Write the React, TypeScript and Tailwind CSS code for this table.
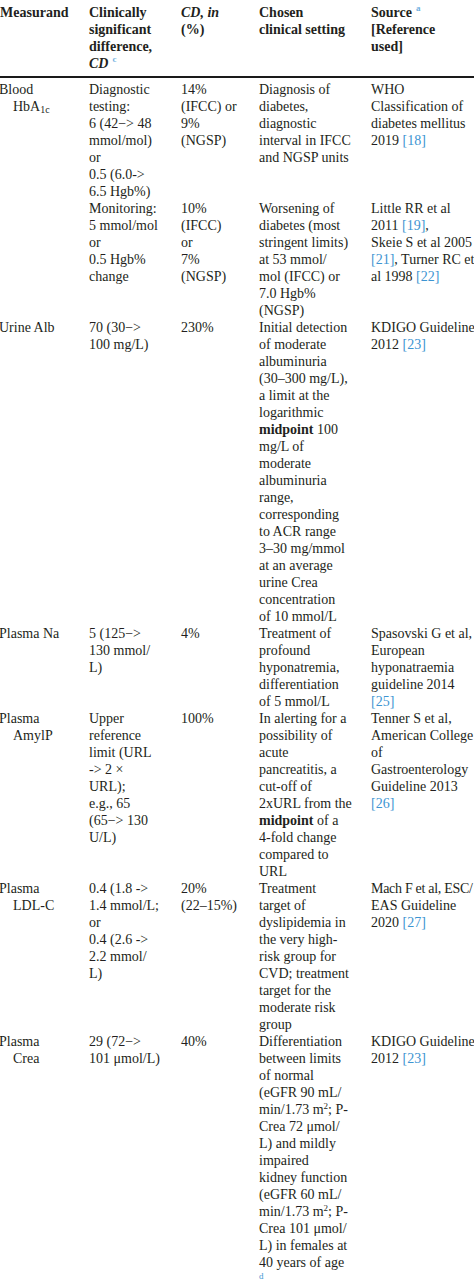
import type { ReactNode } from 'react';

type Lines = ReactNode[];

const Ref = ({ n }: { n: string }) => <span className="text-[#3d95d2]">[{n}]</span>;

const Sup = ({ children }: { children: ReactNode }) => (
  <span className="relative -top-[6px] ml-[4px] text-[9px] leading-none text-[#6fb0e0]">{children}</span>
);

function Line({ children }: { children: ReactNode }) {
  return <div className="h-[17px] leading-[17px] whitespace-nowrap">{children}</div>;
}

function Cell({ lines, first = false }: { lines: Lines; first?: boolean }) {
  return (
    <div className={first ? 'pt-[3px]' : ''}>
      {lines.map((l, i) => (
        <Line key={i}>{l}</Line>
      ))}
    </div>
  );
}

// first column: hanging indent, first line slightly off the left edge
function Measurand({ lines, first = false }: { lines: Lines; first?: boolean }) {
  return (
    <div className={first ? 'pt-[3px]' : ''}>
      {lines.map((l, i) => (
        <div key={i} className={`h-[17px] leading-[17px] whitespace-nowrap ${i === 0 ? '-ml-px' : 'pl-[13px]'}`}>
          {l}
        </div>
      ))}
    </div>
  );
}

type Row = {
  measurand: Lines;
  parts: { cd: Lines; pct: Lines; setting: Lines; source: Lines }[];
};

const rows: Row[] = [
  {
    measurand: ['Blood', <>HbA<sub className="text-[10px]">1c</sub></>],
    parts: [
      {
        cd: ['Diagnostic', 'testing:', '6 (42−> 48', 'mmol/mol)', 'or', '0.5 (6.0->', '6.5 Hgb%)'],
        pct: ['14%', '(IFCC) or', '9%', '(NGSP)'],
        setting: ['Diagnosis of', 'diabetes,', 'diagnostic', 'interval in IFCC', 'and NGSP units'],
        source: ['WHO', 'Classification of', 'diabetes mellitus', <>2019 <Ref n="18" /></>],
      },
      {
        cd: ['Monitoring:', '5 mmol/mol', 'or', '0.5 Hgb%', 'change'],
        pct: ['10%', '(IFCC)', 'or', '7%', '(NGSP)'],
        setting: ['Worsening of', 'diabetes (most', 'stringent limits)', 'at 53 mmol/', 'mol (IFCC) or', '7.0 Hgb%', '(NGSP)'],
        source: [
          'Little RR et al',
          <>2011 <Ref n="19" />,</>,
          'Skeie S et al 2005',
          <><Ref n="21" />, Turner RC et</>,
          <>al 1998 <Ref n="22" /></>,
        ],
      },
    ],
  },
  {
    measurand: ['Urine Alb'],
    parts: [
      {
        cd: ['70 (30−>', '100 mg/L)'],
        pct: ['230%'],
        setting: [
          'Initial detection',
          'of moderate',
          'albuminuria',
          '(30–300 mg/L),',
          'a limit at the',
          'logarithmic',
          <><b>midpoint</b> 100</>,
          'mg/L of',
          'moderate',
          'albuminuria',
          'range,',
          'corresponding',
          'to ACR range',
          '3–30 mg/mmol',
          'at an average',
          'urine Crea',
          'concentration',
          'of 10 mmol/L',
        ],
        source: ['KDIGO Guideline', <>2012 <Ref n="23" /></>],
      },
    ],
  },
  {
    measurand: ['Plasma Na'],
    parts: [
      {
        cd: ['5 (125−>', '130 mmol/', 'L)'],
        pct: ['4%'],
        setting: ['Treatment of', 'profound', 'hyponatremia,', 'differentiation', 'of 5 mmol/L'],
        source: ['Spasovski G et al,', 'European', 'hyponatraemia', 'guideline 2014', <Ref n="25" />],
      },
    ],
  },
  {
    measurand: ['Plasma', 'AmylP'],
    parts: [
      {
        cd: ['Upper', 'reference', 'limit (URL', '-> 2 ×', 'URL);', 'e.g., 65', '(65−> 130', 'U/L)'],
        pct: ['100%'],
        setting: [
          'In alerting for a',
          'possibility of',
          'acute',
          'pancreatitis, a',
          'cut-off of',
          '2xURL from the',
          <><b>midpoint</b> of a</>,
          '4-fold change',
          'compared to',
          'URL',
        ],
        source: ['Tenner S et al,', 'American College', 'of', 'Gastroenterology', 'Guideline 2013', <Ref n="26" />],
      },
    ],
  },
  {
    measurand: ['Plasma', 'LDL-C'],
    parts: [
      {
        cd: ['0.4 (1.8 ->', '1.4 mmol/L;', 'or', '0.4 (2.6 ->', '2.2 mmol/', 'L)'],
        pct: ['20%', '(22–15%)'],
        setting: [
          'Treatment',
          'target of',
          'dyslipidemia in',
          'the very high-',
          'risk group for',
          'CVD; treatment',
          'target for the',
          'moderate risk',
          'group',
        ],
        source: [
          <span className="tracking-[-0.3px]">Mach F et al, ESC/</span>,
          'EAS Guideline',
          <>2020 <Ref n="27" /></>,
        ],
      },
    ],
  },
  {
    measurand: ['Plasma', 'Crea'],
    parts: [
      {
        cd: ['29 (72−>', '101 μmol/L)'],
        pct: ['40%'],
        setting: [
          'Differentiation',
          'between limits',
          'of normal',
          '(eGFR 90 mL/',
          <>min/1.73 m<sup className="text-[9px]">2</sup>; P-</>,
          'Crea 72 μmol/',
          'L) and mildly',
          'impaired',
          'kidney function',
          '(eGFR 60 mL/',
          <>min/1.73 m<sup className="text-[9px]">2</sup>; P-</>,
          'Crea 101 μmol/',
          'L) in females at',
          '40 years of age',
        ],
        source: ['KDIGO Guideline', <>2012 <Ref n="23" /></>],
      },
    ],
  },
];

export default function App() {
  return (
    <div className="w-[474px] overflow-hidden bg-white pt-[4px] text-[14px] text-[#231f20] font-['Liberation_Serif',serif]">
      <div className="grid grid-cols-[89px_92px_78px_112px_103px]">
        {/* Header */}
        <div className="pb-[4px] font-bold">
          <Line>Measurand</Line>
        </div>
        <div className="pb-[4px] font-bold">
          <Line>Clinically</Line>
          <Line>significant</Line>
          <Line>difference,</Line>
          <Line>
            <i>CD</i>
            <Sup>c</Sup>
          </Line>
        </div>
        <div className="pb-[4px] font-bold">
          <Line>
            <i>CD, in</i>
          </Line>
          <Line>(%)</Line>
        </div>
        <div className="pb-[4px] font-bold">
          <Line>Chosen</Line>
          <Line>clinical setting</Line>
        </div>
        <div className="pb-[4px] font-bold">
          <Line>
            Source<Sup>a</Sup>
          </Line>
          <Line>[Reference</Line>
          <Line>used]</Line>
        </div>
        <div className="col-span-5 h-[1.5px] bg-[#1a1a1a]" />

        {/* Body */}
        {rows.map((row, ri) => (
          <div key={ri} className="contents">
            <div className={row.parts.length > 1 ? 'row-span-2' : ''}>
              <Measurand lines={row.measurand} first={ri === 0} />
            </div>
            {row.parts.map((p, pi) => {
              const first = ri === 0 && pi === 0;
              return (
                <div key={pi} className="contents">
                  <Cell lines={p.cd} first={first} />
                  <Cell lines={p.pct} first={first} />
                  <Cell lines={p.setting} first={first} />
                  <Cell lines={p.source} first={first} />
                </div>
              );
            })}
          </div>
        ))}
        <div className="col-start-4 text-[9px] leading-[10px] text-[#3d95d2]">d</div>
      </div>
    </div>
  );
}
